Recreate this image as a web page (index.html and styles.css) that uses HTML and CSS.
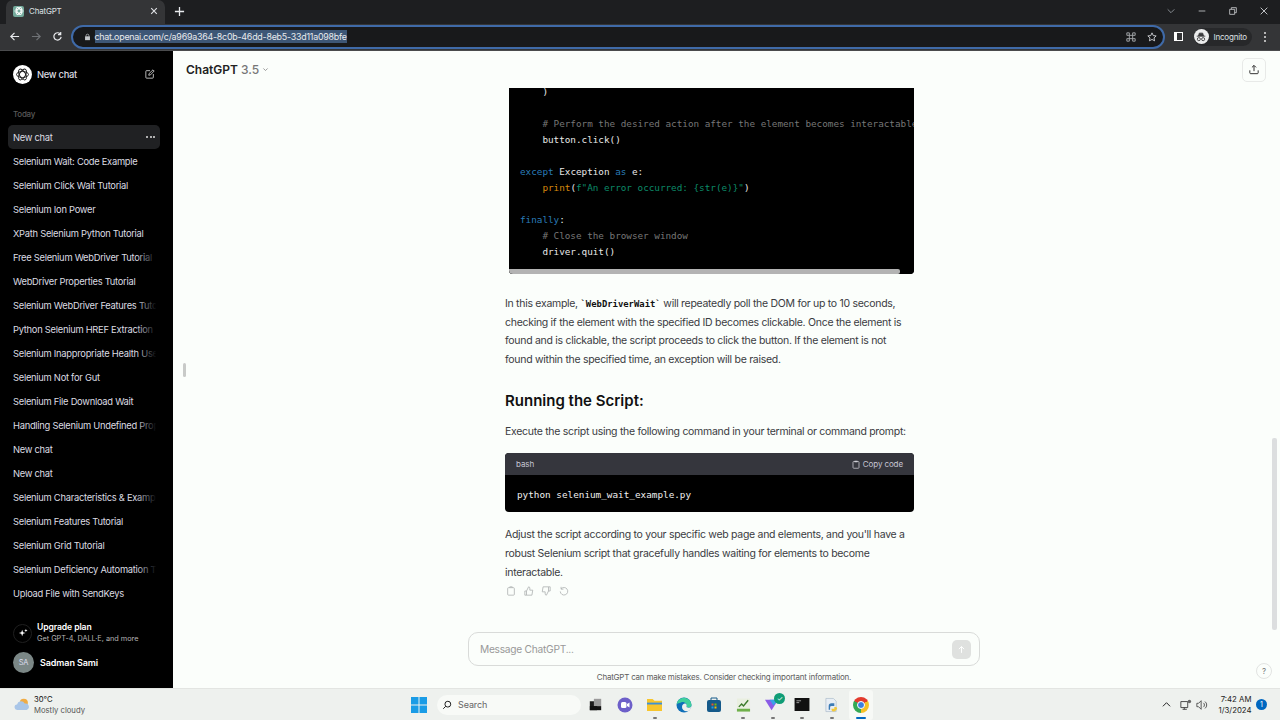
FILE: index.html
```html
<!DOCTYPE html>
<html lang="en">
<head>
    <meta charset="UTF-8">
    <title>ChatGPT</title>
    <link rel="stylesheet" href="styles.css">
</head>
<body>
    <div class="tabbar">
        <div class="tab">
            <span class="tab-icon"><svg viewBox="0 0 12 12" width="10" height="10"><g fill="none" stroke="#fff" stroke-width="1"><ellipse cx="6" cy="6" rx="5" ry="2.4"/><ellipse cx="6" cy="6" rx="5" ry="2.4" transform="rotate(60 6 6)"/><ellipse cx="6" cy="6" rx="5" ry="2.4" transform="rotate(120 6 6)"/></g></svg></span>
            <span class="tab-title">ChatGPT</span>
            <svg class="tab-close" viewBox="0 0 10 10" width="8" height="8"><path d="M1.5 1.5l7 7M8.5 1.5l-7 7" stroke="#dfe1e4" stroke-width="1.4"/></svg>
        </div>
        <svg class="tab-new" viewBox="0 0 12 12" width="11" height="11"><path d="M6 1v10M1 6h10" stroke="#e8eaed" stroke-width="1.4"/></svg>
        <div class="window-btns">
            <svg viewBox="0 0 12 12" width="10" height="10"><path d="M2 4l4 4 4-4" fill="none" stroke="#9aa0a6" stroke-width="1"/></svg>
            <svg viewBox="0 0 12 12" width="10" height="10"><path d="M2 6h8" stroke="#c8cacd" stroke-width="1"/></svg>
            <svg viewBox="0 0 12 12" width="10" height="10"><path d="M2 4h6v6H2zM4 4V2h6v6H8" fill="none" stroke="#c8cacd" stroke-width="1"/></svg>
            <svg viewBox="0 0 12 12" width="10" height="10"><path d="M2 2l8 8M10 2l-8 8" stroke="#dfe1e4" stroke-width="1"/></svg>
        </div>
    </div>

    <div class="toolbar">
        <svg class="nav-btn" viewBox="0 0 12 12" width="11" height="11"><path d="M11 6H2M6 2L2 6l4 4" fill="none" stroke="#e8eaed" stroke-width="1.3"/></svg>
        <svg class="nav-btn" viewBox="0 0 12 12" width="11" height="11"><path d="M1 6h9M6 2l4 4-4 4" fill="none" stroke="#6f7276" stroke-width="1.3"/></svg>
        <svg class="nav-btn" viewBox="0 0 12 12" width="11" height="11"><path d="M10 6.5A4 4 0 1 1 9 3.2M9.500 1v3h-3" fill="none" stroke="#e8eaed" stroke-width="1.3"/></svg>
        <div class="omnibox">
            <svg class="lock" viewBox="0 0 10 10" width="7" height="8"><path d="M3 4V3a2 2 0 0 1 4 0v1" fill="none" stroke="#c4c7ca"/><rect x="1.5" y="4" width="7" height="5.5" fill="#c4c7ca"/></svg>
            <span class="url">chat.openai.com/c/a969a364-8c0b-46dd-8eb5-33d11a098bfe</span>
            <svg class="omni-icon" viewBox="0 0 12 12" width="10" height="10"><path d="M1 1h3v3H1zM8 1h3v3H8zM1 8h3v3H1zM8 8h3v3H8zM4 4h4v4H4z" fill="none" stroke="#b4b7ba"/></svg>
            <svg class="omni-icon" viewBox="0 0 12 12" width="10" height="10"><path d="M6 1l1.5 3.3 3.5.4-2.600 2.400.7 3.500L6 8.900l-3.100 1.700.7-3.500L1 4.700l3.500-.4z" fill="none" stroke="#dfe1e4"/></svg>
        </div>
        <span class="side-panel"></span>
        <div class="profile">
            <span class="profile-icon"><svg viewBox="0 0 14 14" width="12" height="12"><path d="M2 6h10M4 6l1-3.500h4L10 6" fill="#3a3b3d" stroke="#3a3b3d"/><circle cx="4.500" cy="9.500" r="1.800" fill="none" stroke="#3a3b3d"/><circle cx="9.500" cy="9.500" r="1.800" fill="none" stroke="#3a3b3d"/></svg></span>
            <span>Incognito</span>
        </div>
        <span class="kebab"><i></i><i></i><i></i></span>
    </div>

    <div class="app">
        <aside class="sidebar">
            <div class="side-top">
                <span class="logo"><svg viewBox="0 0 20 20" width="15" height="15"><g fill="none" stroke="#111" stroke-width="1.2"><ellipse cx="10" cy="10" rx="8" ry="4"/><ellipse cx="10" cy="10" rx="8" ry="4" transform="rotate(60 10 10)"/><ellipse cx="10" cy="10" rx="8" ry="4" transform="rotate(120 10 10)"/></g></svg></span>
                <span class="side-new">New chat</span>
                <svg class="edit-icon" viewBox="0 0 12 12" width="10" height="10"><path d="M6 2H2.200A1 1 0 0 0 1 3v6.800A1 1 0 0 0 2 11h6.800A1 1 0 0 0 10 10V6M4.500 7.500l.4-2L9.600 1l1.400 1.400-4.500 4.700z" fill="none" stroke="#d9d9d9" stroke-width="1"/></svg>
            </div>
            <div class="side-label">Today</div>
            <nav class="chats">
                <a class="chat active">New chat<span class="dots"><i></i><i></i><i></i></span></a>
                <a class="chat">Selenium Wait: Code Example</a>
                <a class="chat">Selenium Click Wait Tutorial</a>
                <a class="chat">Selenium Ion Power</a>
                <a class="chat">XPath Selenium Python Tutorial</a>
                <a class="chat fade">Free Selenium WebDriver Tutorial</a>
                <a class="chat">WebDriver Properties Tutorial</a>
                <a class="chat fade">Selenium WebDriver Features Tutorial</a>
                <a class="chat fade">Python Selenium HREF Extraction</a>
                <a class="chat fade">Selenium Inappropriate Health Use</a>
                <a class="chat">Selenium Not for Gut</a>
                <a class="chat">Selenium File Download Wait</a>
                <a class="chat fade">Handling Selenium Undefined Props</a>
                <a class="chat">New chat</a>
                <a class="chat">New chat</a>
                <a class="chat fade">Selenium Characteristics &amp; Examples</a>
                <a class="chat">Selenium Features Tutorial</a>
                <a class="chat">Selenium Grid Tutorial</a>
                <a class="chat fade">Selenium Deficiency Automation Tips</a>
                <a class="chat">Upload File with SendKeys</a>
            </nav>
            <div class="upgrade">
                <span class="upgrade-icon"><svg viewBox="0 0 12 12" width="10" height="10"><path d="M5 2l1 3 3 1-3 1-1 3-1-3-3-1 3-1zM9.500 1l.5 1.500 1.500.5-1.500.5-.5 1.500-.5-1.500L7.500 3 9 2.500z" fill="#fff"/></svg></span>
                <div>
                    <div class="upgrade-title">Upgrade plan</div>
                    <div class="upgrade-sub">Get GPT-4, DALL·E, and more</div>
                </div>
            </div>
            <div class="user">
                <span class="avatar">SA</span>
                <span class="user-name">Sadman Sami</span>
            </div>
        </aside>

        <main class="main">
            <span class="side-handle"></span>
            <header class="top">
                <div class="model">ChatGPT <span>3.5</span>
                    <svg viewBox="0 0 10 10" width="7" height="7"><path d="M2 3.500l3 3 3-3" fill="none" stroke="#8a8a8a" stroke-width="1.2"/></svg>
                </div>
                <button class="share"><svg viewBox="0 0 12 12" width="10" height="11"><path d="M6 8V1.500M3.500 3.500L6 1l2.500 2.500M1 7v3a1 1 0 0 0 1 1h8a1 1 0 0 0 1-1V7" fill="none" stroke="#222" stroke-width="1.100"/></svg></button>
            </header>

            <div class="thread">
                <div class="column">
                    <div class="code-top">
<pre class="code">    <span class="plain">)</span>

    <span class="cm"># Perform the desired action after the element becomes interactable</span>
    <span class="plain">button.click()</span>

<span class="kw">except</span> <span class="plain">Exception</span> <span class="kw">as</span> <span class="plain">e:</span>
    <span class="fn">print</span><span class="plain">(</span><span class="str">f"An error occurred: {str(e)}"</span><span class="plain">)</span>

<span class="kw">finally</span><span class="plain">:</span>
    <span class="cm"># Close the browser window</span>
    <span class="plain">driver.quit()</span></pre>
                        <div class="code-scroll"><span></span></div>
                    </div>

                    <p class="para para-first">In this example, <code>`WebDriverWait`</code> will repeatedly poll the DOM for up to 10 seconds, checking if the element with the specified ID becomes clickable. Once the element is found and is clickable, the script proceeds to click the button. If the element is not found within the specified time, an exception will be raised.</p>

                    <h3>Running the Script:</h3>

                    <p class="para para-cmd">Execute the script using the following command in your terminal or command prompt:</p>

                    <div class="code-block">
                        <div class="code-head">
                            <span>bash</span>
                            <span class="copy"><svg viewBox="0 0 10 12" width="8" height="9"><rect x="1" y="2" width="8" height="9" rx="1" fill="none" stroke="#cfcfd6"/><rect x="3" y="1" width="4" height="2" fill="#cfcfd6"/></svg>Copy code</span>
                        </div>
                        <pre class="code-cmd">python selenium_wait_example.py</pre>
                    </div>

                    <p class="para para-end">Adjust the script according to your specific web page and elements, and you'll have a robust Selenium script that gracefully handles waiting for elements to become interactable.</p>

                    <div class="actions">
                        <svg viewBox="0 0 12 12" width="10" height="10"><rect x="2" y="2" width="8" height="9" rx="1" fill="none" stroke="#b0b3b3"/><path d="M4.500 2V1h3v1" fill="none" stroke="#b0b3b3"/></svg>
                        <svg viewBox="0 0 12 12" width="10" height="10"><path d="M1 6h2v5H1zM3 6l2.500-5c1 0 1.500.7 1.500 1.500V5h3.500l-1 6H3" fill="none" stroke="#b0b3b3"/></svg>
                        <svg viewBox="0 0 12 12" width="10" height="10"><path d="M11 6H9V1h2zM9 6l-2.500 5c-1 0-1.500-.7-1.500-1.500V7H1.500l1-6H9" fill="none" stroke="#b0b3b3"/></svg>
                        <svg viewBox="0 0 12 12" width="10" height="10"><path d="M2.500 3.500A4.500 4.500 0 1 1 1.500 6.500M2.500 1v2.800h2.800" fill="none" stroke="#b0b3b3"/></svg>
                    </div>
                </div>
                <span class="page-scroll"></span>
            </div>

            <div class="composer-wrap">
                <div class="composer">
                    <span>Message ChatGPT...</span>
                    <span class="send"><svg viewBox="0 0 12 12" width="9" height="9"><path d="M6 10.500V2M2.500 5.500L6 2l3.500 3.500" fill="none" stroke="#fff" stroke-width="1.300"/></svg></span>
                </div>
                <div class="disclaimer">ChatGPT can make mistakes. Consider checking important information.</div>
            </div>
            <span class="help">?</span>
        </main>
    </div>

    <footer class="taskbar">
        <div class="weather">
            <svg viewBox="0 0 20 16" width="18" height="15"><circle cx="12" cy="6" r="4.500" fill="#f0ac45"/><path d="M5 14a3 3 0 0 1-.5-6 4.500 4.500 0 0 1 8.500-1 3.500 3.500 0 0 1 2 7z" fill="#a9c6e8"/></svg>
            <div>
                <div class="temp">30°C</div>
                <div class="sky">Mostly cloudy</div>
            </div>
        </div>
        <div class="task-center">
            <span class="slot"><svg viewBox="0 0 16 16" width="16" height="16"><path d="M0 0h7.500v7.500H0zM8.500 0H16v7.500H8.500zM0 8.500h7.500V16H0zM8.500 8.500H16V16H8.500z" fill="#1a9ce6"/></svg></span>
            <div class="search">
                <svg viewBox="0 0 12 12" width="10" height="10"><circle cx="7" cy="5" r="3.500" fill="none" stroke="#222" stroke-width="1.200"/><path d="M4.500 7.500L1.500 10.500" stroke="#222" stroke-width="1.200"/></svg>
                <span>Search</span>
            </div>
            <span class="slot"><svg viewBox="0 0 16 16" width="13" height="13"><path d="M1 4h9v11H1z" fill="#1c1c1c"/><path d="M6 1h9v9H6z" fill="#9a9a9a"/><path d="M1 10h14v5H1z" fill="#111"/></svg></span>
            <span class="slot"><svg viewBox="0 0 16 16" width="16" height="16"><circle cx="8" cy="8" r="7.500" fill="#6d5fc9"/><rect x="4" y="5" width="5.500" height="6" rx="1.500" fill="#fff"/><path d="M10 7l2.500-1.500v5L10 9z" fill="#fff"/></svg></span>
            <span class="slot dot"><svg viewBox="0 0 16 16" width="17" height="15"><path d="M0 2h6l2 2h8v11H0z" fill="#f7c52d"/><path d="M0 6h16v2H0z" fill="#3b91d8"/></svg></span>
            <span class="slot"><svg viewBox="0 0 16 16" width="16" height="16"><circle cx="8" cy="8" r="7.500" fill="#0f6fb8"/><path d="M.6 7A7.500 7.500 0 0 1 15.500 8c0 2.500-3.500 3.200-5 2 1.500-3-2.500-6-5.500-4.500C3 6.300 1.500 6.500.6 7z" fill="#3fcf9c"/><path d="M6 10c0-2 1.500-3.500 3-3.500s2 1.500 1.500 3.500c1.500 1.200 3.500 1 5-.5-.5 2-1.500 3.500-3 4.500C9 15 6 13 6 10z" fill="#eef0ed"/></svg></span>
            <span class="slot"><svg viewBox="0 0 16 16" width="16" height="16"><rect x="1" y="3" width="14" height="12" rx="2" fill="#155a8a"/><path d="M5 3V1h6v2" fill="none" stroke="#155a8a"/><path d="M5.500 6.500h2v2h-2z" fill="#e9532d"/><path d="M8.500 6.500h2v2h-2z" fill="#7fba00"/><path d="M5.500 9.500h2v2h-2z" fill="#1a9ce6"/><path d="M8.500 9.500h2v2h-2z" fill="#f9b900"/></svg></span>
            <span class="slot dot"><svg viewBox="0 0 16 16" width="15" height="16"><path d="M1 1h14v14H1z" fill="#e9efe0"/><path d="M1 12h14v3H1z" fill="#6eb04a"/><path d="M3 10l3-3 2 2 5-6" fill="none" stroke="#3b7a2a" stroke-width="1.500"/></svg></span>
            <span class="slot dot"><span class="vp"><svg viewBox="0 0 16 16" width="17" height="15"><path d="M0 3h14L7 14z" fill="#8a5ce6"/><path d="M5 3h9L9 9z" fill="#3aa0e8"/></svg><span class="check">✓</span></span></span>
            <span class="slot dot"><svg viewBox="0 0 16 14" width="16" height="13"><rect width="16" height="14" fill="#111"/><path d="M2 3h5M2 5h3" stroke="#aaa"/></svg></span>
            <span class="slot dot"><svg viewBox="0 0 16 16" width="15" height="16"><path d="M2 1h8l3 3v11H2z" fill="#e8eef4" stroke="#9fb2c4" stroke-width=".6"/><path d="M8 6h3v3H8a1.500 1.500 0 0 0-1.500 1.500V13H5v-4a3 3 0 0 1 3-3z" fill="#3b7bb5"/><path d="M8 12h3v-2c1.500 0 3 0 3 1.500S12 15 10 15s-2-2-2-3z" fill="#f2c93c"/></svg></span>
            <span class="slot active"><span class="chrome"></span></span>
        </div>
        <div class="tray">
            <svg class="tray-up" viewBox="0 0 10 10" width="9" height="9"><path d="M1 7l4-4 4 4" fill="none" stroke="#222" stroke-width="1.100"/></svg>
            <svg class="tray-net" viewBox="0 0 14 14" width="12" height="12"><path d="M1 3h8v7H1zM3 12h5M5 10v2" fill="none" stroke="#333"/><circle cx="11" cy="3" r="2" fill="#666"/></svg>
            <svg class="tray-vol" viewBox="0 0 14 14" width="12" height="12"><path d="M1 5h2l3-3v10L3 9H1z" fill="none" stroke="#444"/><path d="M8.500 4.500a3 3 0 0 1 0 5M10.500 3a5 5 0 0 1 0 8" fill="none" stroke="#444"/></svg>
            <div class="clock"><div>7:42 AM</div><div>1/3/2024</div></div>
            <span class="badge">1</span>
        </div>
    </footer>
</body>
</html>
```

FILE: styles.css
```css
* {
    box-sizing: border-box;
}
html, body {
    height: 100%;
}
body {
    margin: 0;
    display: flex;
    flex-direction: column;
    overflow: hidden;
    font-family: Inter, "Liberation Sans", sans-serif;
    background: #fbfefb;
}

/* browser chrome */
.tabbar {
    height: 24px;
    display: flex;
    align-items: center;
    background: #1d1e20;
    flex-shrink: 0;
}
.tab {
    width: 159px;
    height: 24px;
    margin-left: 6px;
    padding: 0 7px 2px 7px;
    display: flex;
    align-items: center;
    background: #343537;
    border-radius: 7px 7px 0 0;
    color: #dfe1e4;
    font-size: 8px;
    letter-spacing: -.2px;
}
.tab-icon {
    width: 11px;
    height: 11px;
    margin-right: 5px;
    border-radius: 2px;
    background: #74aa9c;
    display: flex;
    align-items: center;
    justify-content: center;
}
.tab-title {
    flex: 1;
}
.tab-new {
    margin: 0 0 2px 9px;
}
.window-btns {
    margin-left: auto;
    display: flex;
    align-items: center;
    gap: 21px;
    padding: 0 11px 2px 0;
}
.toolbar {
    height: 27px;
    display: flex;
    align-items: center;
    background: #343537;
    border-bottom: 1px solid #4a4b4d;
    flex-shrink: 0;
    padding: 0 0 1px 9px;
}
.nav-btn {
    margin-right: 10.500px;
}
.omnibox {
    width: 1094px;
    height: 24px;
    margin-left: -3px;
    padding: 0 6px 0 11px;
    display: flex;
    align-items: center;
    background: #18191b;
    border: 2px solid #3f6aa8;
    border-radius: 12px;
}
.lock {
    margin-right: 4px;
}
.url {
    background: #3d5676;
    color: #e8eaed;
    font-size: 8.900px;
    letter-spacing: -.23px;
    line-height: 13px;
    margin-right: auto;
}
.omni-icon {
    margin-left: 11px;
}
.side-panel {
    width: 9px;
    height: 9px;
    margin-left: 9px;
    border: 1px solid #fff;
    border-left-width: 3px;
    background: #343537;
}
.profile {
    height: 18px;
    margin-left: 11px;
    padding-right: 5px;
    display: flex;
    align-items: center;
    gap: 5px;
    border-radius: 9px;
    background: #27282a;
    color: #dfe1e4;
    font-size: 8px;
    letter-spacing: -.2px;
}
.profile-icon {
    width: 15px;
    height: 15px;
    border-radius: 50%;
    background: #eceded;
    display: flex;
    align-items: center;
    justify-content: center;
}
.kebab {
    margin-left: 12px;
    display: flex;
    flex-direction: column;
    gap: 2px;
}
.kebab i, .dots i {
    width: 2px;
    height: 2px;
    background: #e0e0e0;
    border-radius: 50%;
}

/* app */
.app {
    flex: 1;
    display: flex;
    min-height: 0;
}
.sidebar {
    width: 173px;
    flex-shrink: 0;
    background: #000;
    color: #dcdce2;
    padding: 0 13px 0 8px;
    display: flex;
    flex-direction: column;
    font-size: 9.330px;
    letter-spacing: -.26px;
}
.side-top {
    height: 46px;
    padding: 0 5px;
    display: flex;
    align-items: center;
}
.logo {
    width: 19px;
    height: 19px;
    border-radius: 50%;
    background: #fff;
    display: flex;
    align-items: center;
    justify-content: center;
}
.side-new {
    margin-left: 5px;
    flex: 1;
    font-weight: 500;
}
.edit-icon {
    flex-shrink: 0;
}
.side-label {
    padding: 12px 5px 0;
    height: 28px;
    color: #595959;
    font-size: 8px;
    font-weight: 500;
}
.chats {
    display: flex;
    flex-direction: column;
}
.chat {
    height: 24px;
    padding: 0 5px;
    display: flex;
    align-items: center;
    justify-content: space-between;
    white-space: nowrap;
    overflow: hidden;
    border-radius: 5px;
    position: relative;
}
.chat.active {
    background: #202123;
}
.chat.fade::after {
    content: "";
    position: absolute;
    right: 0;
    top: 0;
    bottom: 0;
    width: 24px;
    background: linear-gradient(to right, rgba(0,0,0,0), #000 85%);
}
.dots {
    display: flex;
    gap: 1.500px;
}
.upgrade {
    margin-top: 17px;
    padding: 0 5px;
    display: flex;
    align-items: center;
    gap: 5px;
}
.upgrade-icon {
    width: 19px;
    height: 19px;
    border-radius: 50%;
    border: 1px solid #1f1f1f;
    display: flex;
    align-items: center;
    justify-content: center;
}
.upgrade-title {
    color: #fff;
    font-size: 8.600px;
    font-weight: 600;
    line-height: 11px;
    letter-spacing: -.1px;
    white-space: nowrap;
}
.upgrade-sub {
    color: #b4b4b4;
    font-size: 7.300px;
    line-height: 11px;
    letter-spacing: 0;
    white-space: nowrap;
}
.user {
    margin-top: 8px;
    padding: 0 5px;
    display: flex;
    align-items: center;
    gap: 6px;
}
.avatar {
    width: 21px;
    height: 21px;
    border-radius: 50%;
    background: #7b8786;
    color: #dde;
    font-size: 7.500px;
    display: flex;
    align-items: center;
    justify-content: center;
}
.user-name {
    color: #fff;
    font-size: 9px;
    font-weight: 600;
    letter-spacing: -.1px;
}

/* main */
.main {
    flex: 1;
    min-width: 0;
    display: flex;
    flex-direction: column;
    position: relative;
    background: #fbfefb;
}
.side-handle {
    position: absolute;
    left: 10px;
    top: 312px;
    width: 3px;
    height: 14px;
    background: #c8cac8;
    border-radius: 2px;
}
.top {
    height: 37px;
    flex-shrink: 0;
    padding: 0 14px 0 13px;
    display: flex;
    align-items: center;
    justify-content: space-between;
}
.model {
    font-size: 12px;
    font-weight: 600;
    color: #222;
    display: flex;
    align-items: center;
    gap: 3px;
}
.model span {
    color: #777;
    font-weight: 500;
}
.share {
    width: 24px;
    height: 24px;
    padding: 0;
    border: 1px solid #e8eae8;
    border-radius: 5px;
    background: none;
    display: flex;
    align-items: center;
    justify-content: center;
}
.thread {
    flex: 1;
    min-height: 0;
    position: relative;
    overflow: hidden;
    padding-left: 332px;
}
.column {
    width: 409px;
    font-size: 10.500px;
    letter-spacing: -.29px;
    line-height: 18.670px;
    color: #3a3b3f;
}
.code-top {
    margin-left: 4px;
    background: #000;
    border-radius: 0 0 4px 4px;
    overflow: hidden;
}
.code {
    margin: -4px 0 0;
    height: 185px;
    padding: 0 0 0 11px;
    overflow: hidden;
    font-family: "DejaVu Sans Mono", "Liberation Mono", monospace;
    font-size: 9.330px;
    line-height: 16px;
    color: #fff;
    letter-spacing: -.02px;
}
.plain {
    color: #e8e8e8;
}
.cm {
    color: #767676;
}
.kw {
    color: #2a7cb8;
}
.fn {
    color: #d8890c;
}
.str {
    color: #0c8a68;
}
.code-scroll {
    height: 5px;
    background: #000;
}
.code-scroll span {
    display: block;
    width: 391px;
    height: 5px;
    background: #b3b3b3;
    border-radius: 0 2px 2px 2px;
}
.para {
    margin: 0;
}
.para-first {
    margin-top: 21px;
}
.para code {
    font-family: "DejaVu Sans Mono", "Liberation Mono", monospace;
    font-size: 8.900px;
    font-weight: 700;
    letter-spacing: 0;
    line-height: 12px;
    color: #111;
}
h3 {
    margin: 19px 0 0;
    font-size: 15px;
    line-height: 24px;
    font-weight: 600;
    letter-spacing: 0;
    color: #111;
}
.para-cmd {
    margin-top: 10px;
}
.code-block {
    margin-top: 12px;
    border-radius: 4px;
    overflow: hidden;
    background: #000;
}
.code-head {
    height: 22px;
    padding: 0 11px;
    display: flex;
    align-items: center;
    justify-content: space-between;
    background: #35363d;
    color: #c5c5d2;
    font-size: 8px;
    letter-spacing: -.1px;
}
.copy {
    display: flex;
    align-items: center;
    gap: 3px;
}
.code-cmd {
    margin: 0;
    height: 37px;
    padding: 12px 12px 9px;
    font-family: "DejaVu Sans Mono", "Liberation Mono", monospace;
    font-size: 9.330px;
    letter-spacing: 0;
    line-height: 16px;
    color: #f0f0f0;
}
.para-end {
    margin-top: 14px;
}
.actions {
    margin-top: 4px;
    padding-left: 1px;
    display: flex;
    gap: 7.500px;
}
.page-scroll {
    position: absolute;
    right: 3px;
    top: 350px;
    width: 5px;
    height: 192px;
    background: #dcdedf;
    border-radius: 2px;
}
.composer-wrap {
    flex-shrink: 0;
    height: 57px;
    padding: 1px 5px 0 0;
    display: flex;
    flex-direction: column;
    align-items: center;
}
.composer {
    width: 512px;
    height: 34px;
    padding: 0 8px 0 11px;
    border: 1px solid #d9dbd9;
    border-radius: 10px;
    display: flex;
    align-items: center;
    justify-content: space-between;
    color: #999;
    font-size: 10.200px;
    letter-spacing: -.26px;
}
.send {
    width: 19px;
    height: 19px;
    background: #dfe1df;
    border-radius: 5px;
    display: flex;
    align-items: center;
    justify-content: center;
}
.disclaimer {
    margin-top: 5px;
    color: #5d5d5d;
    font-size: 8px;
    letter-spacing: -.23px;
    line-height: 12px;
}
.help {
    position: absolute;
    right: 8px;
    bottom: 9px;
    width: 16px;
    height: 16px;
    border: 1px solid #e2e4e2;
    border-radius: 50%;
    color: #777;
    font-size: 8px;
    display: flex;
    align-items: center;
    justify-content: center;
}

/* windows taskbar */
.taskbar {
    height: 32px;
    flex-shrink: 0;
    display: flex;
    align-items: center;
    position: relative;
    background: #eef1ee;
    border-top: 1px solid #e3e5e2;
}
.weather {
    width: 404px;
    padding-left: 13px;
    display: flex;
    align-items: center;
    gap: 3px;
    font-size: 7.700px;
    line-height: 11px;
    color: #111;
}
.sky {
    color: #555;
}
.task-center {
    display: flex;
    align-items: center;
}
.slot {
    width: 29.500px;
    height: 30px;
    flex-shrink: 0;
    display: flex;
    align-items: center;
    justify-content: center;
    position: relative;
}
.search {
    width: 144px;
    height: 20px;
    margin-left: 3.500px;
    padding-left: 5px;
    display: flex;
    align-items: center;
    gap: 6px;
    background: #f8faf7;
    border-radius: 10px;
    color: #666;
    font-size: 9px;
    letter-spacing: -.1px;
}
.slot.dot::after {
    content: "";
    position: absolute;
    bottom: 1px;
    left: 50%;
    margin-left: -2px;
    width: 4px;
    height: 2px;
    background: #777;
    border-radius: 1px;
}
.slot.active {
    width: 24px;
    margin-left: 2.750px;
    background: #f7f9f6;
    border-radius: 3px;
}
.slot.active::after {
    content: "";
    position: absolute;
    bottom: 1px;
    left: 7px;
    width: 10px;
    height: 2px;
    background: #0067c0;
    border-radius: 1px;
}
.chrome {
    width: 16px;
    height: 16px;
    border-radius: 50%;
    background: conic-gradient(from -60deg, #e33b2e 0 33%, #f6c026 33% 66%, #34a853 66%);
    position: relative;
}
.chrome::after {
    content: "";
    position: absolute;
    inset: 4px;
    background: #3c7fe0;
    border: 1px solid #fff;
    border-radius: 50%;
}
.vp {
    display: flex;
    position: relative;
}
.check {
    position: absolute;
    top: -4px;
    right: -4px;
    width: 11px;
    height: 11px;
    border-radius: 50%;
    background: #0f9d76;
    color: #fff;
    font-size: 7px;
    line-height: 11px;
    text-align: center;
}
.tray {
    margin-left: auto;
    padding-right: 13px;
    display: flex;
    align-items: center;
}
.tray-up {
    margin-right: 8.500px;
}
.tray-net {
    margin-right: 4px;
}
.tray-vol {
    margin-right: 11px;
}
.clock {
    margin-right: 4.500px;
    text-align: right;
    font-size: 7.800px;
    line-height: 11px;
    color: #222;
}
.badge {
    width: 11px;
    height: 11px;
    border-radius: 50%;
    background: #0067c0;
    color: #fff;
    font-size: 7px;
    line-height: 11px;
    text-align: center;
}
```
